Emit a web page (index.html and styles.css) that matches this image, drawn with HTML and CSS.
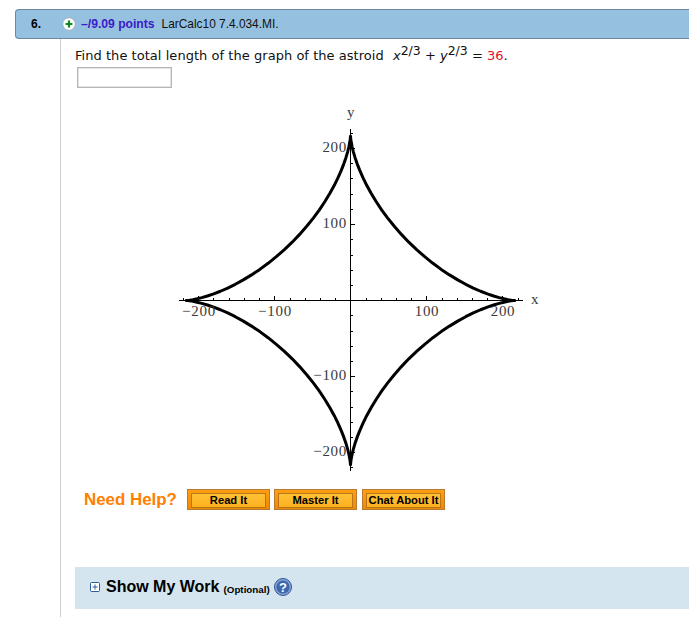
FILE: index.html
```html
<!DOCTYPE html>
<html lang="en">
<head>
<meta charset="utf-8">
<title>Question 6</title>
<link rel="stylesheet" href="styles.css">
</head>
<body>
<header class="q-header">
  <span class="q-num">6.</span>
  <svg class="q-plus" width="14" height="14" viewBox="0 0 14 14"><circle cx="7" cy="7" r="6.3" fill="#fff" stroke="#9db2c2"/><path d="M7 3.6v6.8M3.6 7h6.8" stroke="#0a8a1e" stroke-width="2.2"/></svg>
  <span class="q-points">–/9.09 points</span>
  <span class="q-ref">LarCalc10 7.4.034.MI.</span>
</header>
<main class="q-body">
  <p class="q-text">Find the total length of the graph of the astroid <span class="math"><i>x</i><sup>2/3</sup> + <i>y</i><sup>2/3</sup> = <span class="red">36</span>.</span></p>
  <input class="q-input" type="text" aria-label="Answer">
  <svg class="chart" width="375" height="380" viewBox="170 100 375 380">
    <defs>
      <polyline id="arc" fill="none" stroke="#000" stroke-width="3" stroke-linejoin="round" points="165,0 163.1,.11 160.8,.37 157.6,.86 153.5,1.67 148.7,2.86 143.1,4.49 136.9,6.6 130.1,9.25 122.8,12.45 115.2,16.2 107.2,20.6 99,25.6 90.7,31.1 82.4,37.2 74.2,43.8 66.1,50.9 58.3,58.3 50.9,66.1 43.8,74.2 37.2,82.4 31.1,90.7 25.6,99 20.6,107.2 16.2,115.2 12.45,122.8 9.25,130.1 6.6,136.9 4.49,143.1 2.86,148.7 1.67,153.5 .86,157.6 .37,160.8 .11,163.1 0,165"/>
    </defs>
    <g stroke="#000" stroke-width="1" fill="none">
      <path d="M179 299.5H523M350.5 128V470"/>
      <path d="M198.5 295V299M274.5 295V299M426.5 295V299M502.5 295V299M355 147.5H351M355 223.5H351M355 375.5H351M355 451.5H351"/>
      <path d="M183.5 297V299M213.5 297V299M229.5 297V299M244.5 297V299M259.5 297V299M290.5 297V299M305.5 297V299M320.5 297V299M335.5 297V299M366.5 297V299M381.5 297V299M396.5 297V299M411.5 297V299M442.5 297V299M457.5 297V299M472.5 297V299M487.5 297V299M518.5 297V299"/>
      <path d="M353 132.5H351M353 162.5H351M353 177.5H351M353 193.5H351M353 208.5H351M353 238.5H351M353 254.5H351M353 269.5H351M353 284.5H351M353 314.5H351M353 330.5H351M353 345.5H351M353 360.5H351M353 390.5H351M353 406.5H351M353 421.5H351M353 436.5H351M353 466.5H351"/>
    </g>
    <use href="#arc" transform="translate(350.5 299.5) scale(1 -1)"/>
    <use href="#arc" transform="translate(350.5 299.5) scale(-1 -1)"/>
    <use href="#arc" transform="translate(350.5 299.5) scale(1 1)"/>
    <use href="#arc" transform="translate(350.5 299.5) scale(-1 1)"/>
    <g class="lbl">
      <text x="351" y="116" text-anchor="middle">y</text>
      <text x="531" y="303">x</text>
      <text x="199" y="315" text-anchor="middle">−200</text>
      <text x="275" y="315" text-anchor="middle">−100</text>
      <text x="427" y="315" text-anchor="middle">100</text>
      <text x="503" y="315" text-anchor="middle">200</text>
      <text x="347" y="151" text-anchor="end">200</text>
      <text x="347" y="227" text-anchor="end">100</text>
      <text x="347" y="379" text-anchor="end">−100</text>
      <text x="347" y="455" text-anchor="end">−200</text>
    </g>
  </svg>
  <div class="help">
    <span class="help-label">Need Help?</span>
    <a class="btn"><span>Read It</span></a>
    <a class="btn"><span>Master It</span></a>
    <a class="btn"><span>Chat About It</span></a>
  </div>
  <section class="work">
    <svg class="work-plus" width="10" height="10" viewBox="0 0 10 10"><rect x=".5" y=".5" width="9" height="9" rx="1" fill="#fff" stroke="#2a5f95"/><path d="M5 2.5v5M2.5 5h5" stroke="#2a5f95"/></svg>
    <strong class="work-title">Show My Work</strong>
    <span class="work-opt">(Optional)</span>
    <svg class="work-help" width="18" height="18" viewBox="0 0 18 18"><circle cx="9" cy="9" r="8.5" fill="#8aa6cf" stroke="#2f5597"/><circle cx="9" cy="9" r="6.6" fill="#3c68b0"/><text x="9" y="13.5" text-anchor="middle" class="q-mark">?</text></svg>
  </section>
</main>
</body>
</html>
```
FILE: styles.css
```css
html, body { margin: 0; padding: 0; background: #fff; overflow: hidden; }
body { font-family: "Liberation Sans", Arial, sans-serif; color: #000; }

.q-header {
  display: flex;
  align-items: center;
  height: 28px;
  margin: 9px 0 0 15px;
  background: #95c0e0;
  border-top: 1px solid #6b8aa2;
  border-bottom: 1px solid #6b8aa2;
  border-left: 1px solid #6b8aa2;
  border-radius: 4px 0 0 4px;
  box-sizing: content-box;
  font-size: 12px;
}
.q-num { width: 45px; padding-left: 15px; box-sizing: border-box; font-weight: bold; }
.q-plus { margin-right: 5px; margin-left: 1px; }
.q-points { font-weight: bold; font-size: 12.15px; color: #3a1cc8; margin-right: 7px; }
.q-ref { color: #111; font-size: 11.9px; }

.q-body {
  margin-left: 60px;
  border-left: 1px solid #ccc;
  padding: 0 0 8px 14px;
  height: 570px;
}
.q-text {
  margin: 0;
  padding-top: 7px;
  height: 21px;
  font-family: "DejaVu Sans", Verdana, sans-serif;
  font-size: 13px;
  line-height: 19px;
  letter-spacing: .04px;
  color: #111;
}
.math { margin-left: 5px; letter-spacing: 0; }
.math sup { font-size: 12.5px; line-height: 0; vertical-align: 5px; }
.red { color: #e8102a; }

.q-input {
  display: block;
  width: 95px;
  height: 21px;
  margin: 0 0 0 2px;
  padding: 0;
  box-sizing: border-box;
  border: 1px solid #b5b5b5;
  background: #fff;
  box-shadow: inset 0 0 0 .5px #ccc;
}

.chart { display: block; margin: 13px 0 0 95px; }
.lbl text { font-family: "Liberation Serif", serif; font-size: 15px; fill: #3a3a3a; letter-spacing: .7px; }

.help { display: flex; align-items: center; height: 21px; margin: 8px 0 0 9px; }
.help-label { width: 103px; font-size: 16.9px; font-weight: bold; color: #ff8000; }
.btn {
  display: block;
  width: 83px;
  height: 21px;
  box-sizing: border-box;
  margin-right: 4px;
  padding: 3px;
  background: linear-gradient(#ff9f14, #ee8a00);
  border: 1px solid #b87a30;
}
.btn:last-child { margin-left: 1px; }
.btn span {
  display: block;
  height: 13px;
  border: 1px solid #b97518;
  background: linear-gradient(#ffc234, #ffb020);
  box-sizing: content-box;
  font-size: 11.2px;
  font-weight: bold;
  line-height: 12px;
  text-align: center;
  white-space: nowrap;
  margin: 0;
}

.work {
  display: flex;
  align-items: center;
  height: 42px;
  margin-top: 57px;
  padding: 0 0 2px 15px;
  box-sizing: border-box;
  background: #d5e5f0;
}
.work-plus { margin-right: 6px; }
.work-title { font-size: 16px; margin-right: 4px; }
.work-opt { font-size: 9.8px; font-weight: bold; margin-right: 4px; position: relative; top: 2px; }
.q-mark { font-family: "Liberation Sans", sans-serif; font-size: 13px; font-weight: bold; fill: #fff; }
```
